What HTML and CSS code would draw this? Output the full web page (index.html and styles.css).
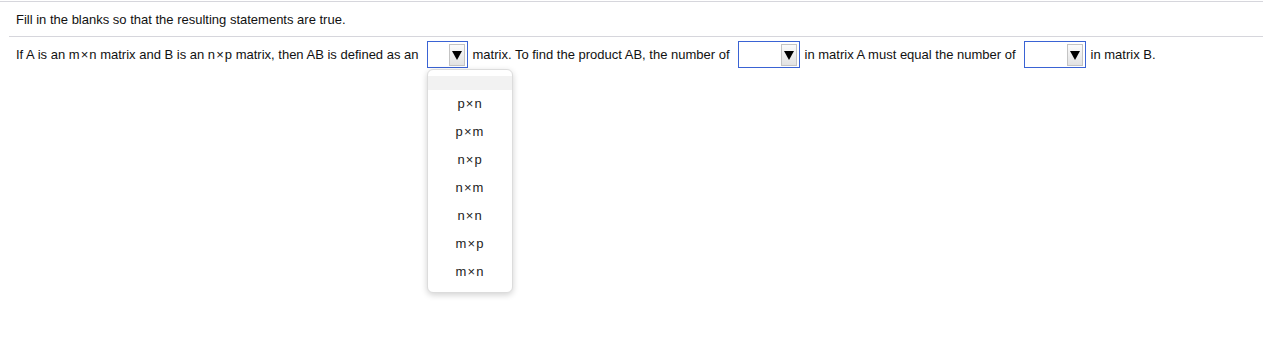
FILE: index.html
```html
<!DOCTYPE html>
<html>
  <head>
    <meta charset="utf-8">
    <title>Fill in the blanks</title>
    <link rel="stylesheet" href="styles.css">
  </head>
  <body>
    <div class="question">
      <div class="prompt">Fill in the blanks so that the resulting statements are true.</div>

      <div class="statement">
        <span>If A is an m&#8202;&times;&#8202;n matrix and B is an n&#8202;&times;&#8202;p matrix, then AB is defined as an</span>

        <div class="blank-select">
          <div class="box short">
            <div class="arrow"><svg width="10" height="10" viewBox="0 0 10 10"><polygon points="0,1 10,1 5,10" fill="#000"/></svg></div>
          </div>
          <div class="option-list">
            <div class="option empty"></div>
            <div class="option">p&#8202;&times;&#8202;n</div>
            <div class="option">p&#8202;&times;&#8202;m</div>
            <div class="option">n&#8202;&times;&#8202;p</div>
            <div class="option">n&#8202;&times;&#8202;m</div>
            <div class="option">n&#8202;&times;&#8202;n</div>
            <div class="option">m&#8202;&times;&#8202;p</div>
            <div class="option">m&#8202;&times;&#8202;n</div>
          </div>
        </div>

        <span>matrix. To find the product AB, the number of</span>
        <div class="blank-select">
          <div class="box">
            <div class="arrow"><svg width="10" height="10" viewBox="0 0 10 10"><polygon points="0,1 10,1 5,10" fill="#000"/></svg></div>
          </div>
        </div>
        <span>in matrix A must equal the number of</span>
        <div class="blank-select">
          <div class="box">
            <div class="arrow"><svg width="10" height="10" viewBox="0 0 10 10"><polygon points="0,1 10,1 5,10" fill="#000"/></svg></div>
          </div>
        </div>
        <span>in matrix B.</span>
      </div>
    </div>
  </body>
</html>
```

FILE: styles.css
```css
* {
  margin: 0;
  padding: 0;
  box-sizing: border-box;
}

body {
  background: #fff;
  color: #111;
  font-family: "Liberation Sans", Arial, sans-serif;
  font-size: 13px;
  min-height: 320px;
}

.question {
  border-top: 1px solid #d6d6dc;
  margin-top: 1px;
}

.prompt {
  margin-left: 9px;
  padding: 10px 0 9px 7px;
  border-bottom: 1px solid #d6d6dc;
}

.statement {
  display: flex;
  align-items: center;
  gap: 6px;
  padding: 4px 0 0 16px;
}

.blank-select {
  position: relative;
  margin: 0 -1px 0 2px;
}

.box {
  display: flex;
  justify-content: flex-end;
  align-items: center;
  width: 62px;
  height: 27px;
  border: 1px solid #3a63d4;
  background: #fff;
  padding-right: 2px;
}

.box.short {
  width: 41px;
}

.arrow {
  display: flex;
  align-items: center;
  justify-content: center;
  width: 16px;
  height: 22px;
  background: linear-gradient(#fbfbfb, #e2e2e2);
  border: 1px solid #c4c4c4;
}

.option-list {
  position: absolute;
  z-index: 5;
  top: 28px;
  left: 0;
  width: 86px;
  padding: 6px 0;
  background: #fff;
  border: 1px solid #dcdcdc;
  border-radius: 6px;
  box-shadow: 0 2px 6px rgba(0, 0, 0, 0.18);
}

.option {
  height: 28px;
  line-height: 28px;
  text-align: center;
  font-size: 13px;
  color: #222;
}

.option.empty {
  height: 14px;
  background: #f2f2f2;
}
```
